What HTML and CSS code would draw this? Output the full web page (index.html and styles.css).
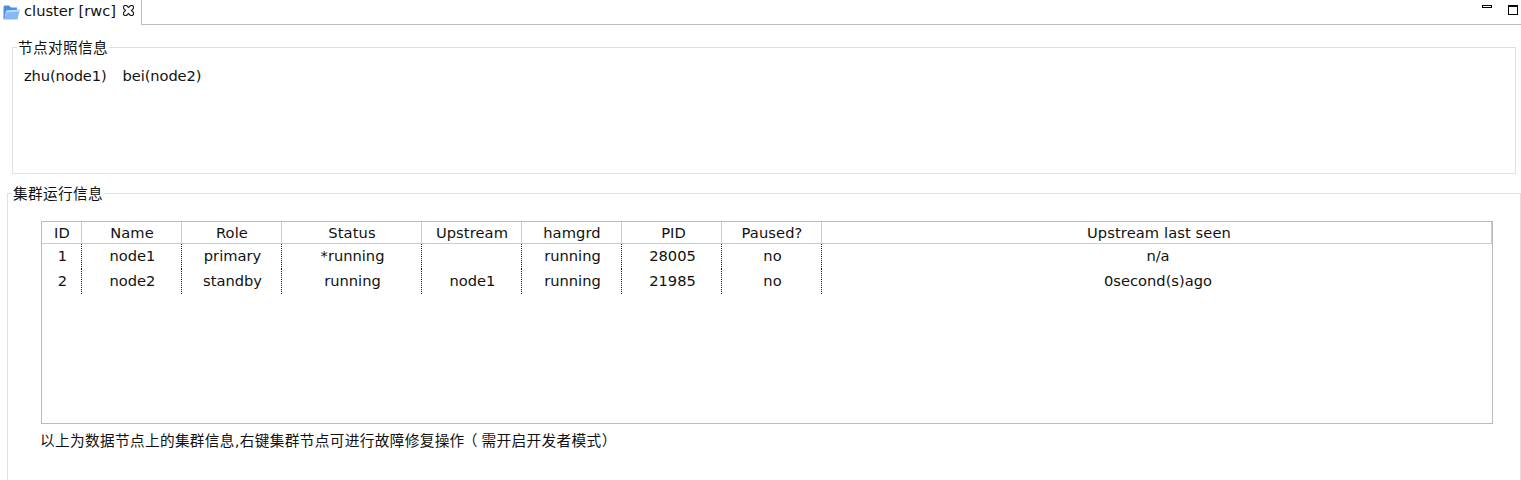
FILE: index.html
```html
<!DOCTYPE html>
<html lang="zh">
<head>
<meta charset="UTF-8" />
<meta name="viewport" content="width=device-width, initial-scale=1" />
<title>cluster [rwc]</title>
<link rel="stylesheet" href="styles.css">
</head>
<body>

<div class="tabbar">
  <div class="tab">
    <svg class="folder" width="17" height="15" viewBox="0 0 17 15">
      <path d="M0.500 2 Q0.500 0.500 2 0.500 L6 0.500 L8 2.500 L14 2.500 L14 5 L3 6 L1.500 14.500 L0.500 14.500 Z" fill="#4a8fe0"/>
      <path d="M3.500 5.500 L16.800 4.500 L14.500 14.500 L1.500 14.500 Z" fill="#86b9f5"/>
      <path d="M3.500 5.500 L16.800 4.500 L16.400 6.500 L3.200 7.500 Z" fill="#bcd9fa"/>
    </svg>
    <span class="tab-title">cluster [rwc]</span>
    <svg class="tab-close" width="11" height="11" viewBox="0 0 11 11">
      <path d="M1.500 0.500 L3.500 0.500 L5.500 2.500 L7.500 0.500 L9.500 0.500 L10.500 1.500 L10.500 3.500 L8.500 5.500 L10.500 7.500 L10.500 9.500 L9.500 10.500 L7.500 10.500 L5.500 8.500 L3.500 10.500 L1.500 10.500 L0.500 9.500 L0.500 7.500 L2.500 5.500 L0.500 3.500 L0.500 1.500 Z" fill="#fff" stroke="#222" stroke-width="1.200"/>
    </svg>
  </div>
  <div class="tab-rest">
    <span class="btn-min"></span>
    <span class="btn-max"></span>
  </div>
</div>

<fieldset class="group group-nodes">
  <legend>节点对照信息</legend>
  <div class="node-map">
    <span>zhu(node1)</span>
    <span>bei(node2)</span>
  </div>
</fieldset>

<fieldset class="group group-cluster">
  <legend>集群运行信息</legend>
  <div class="table-box">
    <table class="cluster-table">
      <colgroup>
        <col class="c-id"><col class="c-m"><col class="c-m"><col class="c-status">
        <col class="c-m"><col class="c-m"><col class="c-m"><col class="c-m"><col>
      </colgroup>
      <thead>
        <tr>
          <th>ID</th><th>Name</th><th>Role</th><th>Status</th><th>Upstream</th>
          <th>hamgrd</th><th class="th-pid">PID</th><th>Paused?</th><th class="th-seen">Upstream last seen</th>
        </tr>
      </thead>
      <tbody>
        <tr>
          <td>1</td><td>node1</td><td>primary</td><td>*running</td><td></td>
          <td>running</td><td>28005</td><td>no</td><td>n/a</td>
        </tr>
        <tr>
          <td>2</td><td>node2</td><td>standby</td><td>running</td><td>node1</td>
          <td>running</td><td>21985</td><td>no</td><td>0second(s)ago</td>
        </tr>
      </tbody>
    </table>
  </div>
  <p class="note">以上为数据节点上的集群信息,右键集群节点可进行故障修复操作<span class="paren paren-open" lang="zh-Hant">（</span>需开启开发者模式<span class="paren" lang="zh-Hant">）</span></p>
</fieldset>

</body>
</html>
```

FILE: styles.css
```css
html, body {
  height: 480px;
  overflow: hidden;
}
body {
  margin: 0;
  display: flex;
  flex-direction: column;
  background: #fff;
  color: #111;
  font-family: "DejaVu Sans", "Noto Sans CJK SC", sans-serif;
  font-size: 14.667px;
}

/* tab bar */
.tabbar {
  display: flex;
  flex: none;
  height: 25px;
}
.tab {
  display: flex;
  align-items: center;
  flex: none;
  width: 142px;
  box-sizing: border-box;
  padding: 0 0 4px 3px;
  border-right: 1px solid #bbb;
}
.folder {
  flex: none;
  margin-top: 4px;
}
.tab-title {
  margin-left: 4px;
  white-space: nowrap;
}
.tab-close {
  margin-left: 7px;
  flex: none;
}
.tab-rest {
  flex: 1;
  display: flex;
  justify-content: flex-end;
  align-items: flex-start;
  gap: 16px;
  padding: 5px 3px 0 0;
  border-bottom: 1px solid #bbb;
}
.btn-min {
  width: 8px;
  height: 1px;
  border: 1px solid #000;
}
.btn-max {
  width: 8px;
  height: 7px;
  border: 1px solid #000;
  border-top-width: 2px;
}

/* groups */
.group {
  margin: 0;
  padding: 0;
  border: 1px solid #e0e0e0;
  min-width: 0;
}
.group legend {
  margin-left: 4px;
  padding: 0 1px;
  line-height: 17px;
  letter-spacing: 0.33px;
}
.group-nodes {
  flex: none;
  box-sizing: border-box;
  margin: 14px 5px 0 12px;
  height: 135px;
}
.node-map {
  display: flex;
  gap: 16px;
  padding: 11px 0 0 11px;
  letter-spacing: -0.1px;
}
.group-cluster {
  flex: 1;
  margin: 11px 0 0 7px;
  border-bottom: 0;
}

/* table */
.table-box {
  margin: 19px 27px 0 33px;
  height: 201px;
  border: 1px solid #bbb;
}
.cluster-table {
  width: 1450px;
  border-collapse: separate;
  border-spacing: 0;
  table-layout: fixed;
}
.c-id { width: 40px; }
.c-m { width: 100px; }
.c-status { width: 140px; }
.cluster-table th {
  height: 21px;
  padding: 0 0 0 1px;
  font-weight: normal;
  letter-spacing: 0.1px;
  border-right: 1px solid #ccc;
  border-bottom: 1px solid #ccc;
}
.cluster-table th.th-pid {
  padding-left: 4px;
}
.cluster-table th.th-seen {
  padding-left: 5px;
}
.cluster-table td {
  height: 23px;
  padding: 0 0 2px 2px;
  text-align: center;
  border-right: 1px dotted #222;
}
.cluster-table td:last-child {
  border-right: 0;
}
.note {
  margin: 7px 0 0 32px;
  line-height: 17px;
  letter-spacing: 0.33px;
}
.paren {
  display: inline-block;
  width: 15px;
  text-align: center;
  font-family: "Noto Sans CJK TC", sans-serif;
  letter-spacing: 0;
}
.paren-open {
  margin-left: 2px;
  transform: translateX(-4px);
}
```
